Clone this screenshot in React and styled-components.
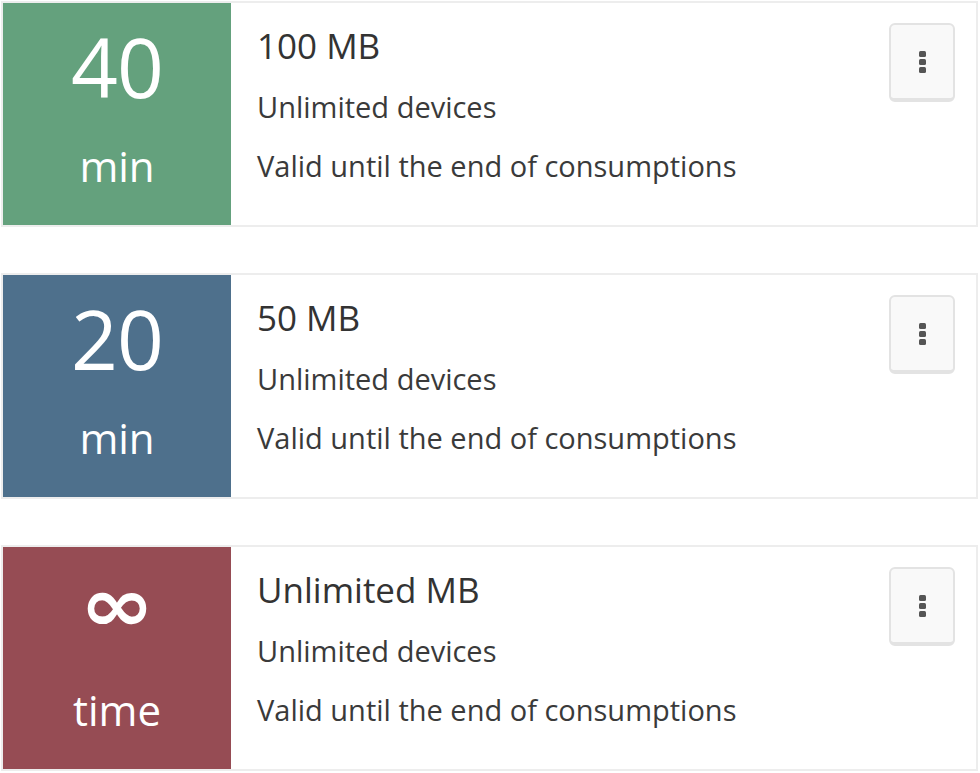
import React from "react";
import styled, { createGlobalStyle } from "styled-components";

const GlobalStyle = createGlobalStyle`
  html, body {
    margin: 0;
    padding: 0;
    background: #ffffff;
  }
  body {
    font-family: "Open Sans", "Noto Sans", sans-serif;
    color: #333333;
  }
`;

const plans = [
  { amount: "40", unit: "min", color: "#64a17d", title: "100 MB" },
  { amount: "20", unit: "min", color: "#4e708c", title: "50 MB" },
  { amount: "∞", unit: "time", color: "#964c54", title: "Unlimited MB", infinite: true },
];

const List = styled.div`
  display: flex;
  flex-direction: column;
  gap: 46px;
  padding: 1px 2px 1px 1px;
`;

const Card = styled.div`
  display: flex;
  height: 222px;
  border: 2px solid #ededed;
  background: #fff;
`;

const Badge = styled.div`
  width: 228px;
  flex-shrink: 0;
  background: ${(p) => p.$color};
  color: #fff;
  display: flex;
  flex-direction: column;
  align-items: center;
`;

const Amount = styled.div`
  font-size: 82px;
  line-height: 1;
  margin-top: 22px;
  height: 82px;
  letter-spacing: -1px;
`;

const Infinity = styled.div`
  font-family: "DejaVu Sans", sans-serif;
  font-size: 90px;
  font-weight: 700;
  line-height: 1;
  margin-top: 13px;
  height: 91px;
  transform: scale(1, 0.84);
`;

const Unit = styled.div`
  font-size: 42px;
  line-height: 1;
  margin-top: 38px;
`;

const Body = styled.div`
  flex: 1;
  display: flex;
  justify-content: space-between;
  padding: 0 21px 0 26px;
`;

const Info = styled.div`
  display: flex;
  flex-direction: column;
  padding-top: 23px;
`;

const Title = styled.div`
  font-size: 35px;
  line-height: 40px;
  color: #333;
`;

const Line = styled.div`
  font-size: 29px;
  line-height: 59px;
  color: #3a3a3a;
  margin-top: ${(p) => (p.$first ? "11px" : "0")};
`;

const MenuButton = styled.button`
  margin-top: 20px;
  width: 66px;
  height: 79px;
  border: 2px solid #e3e3e3;
  border-bottom-width: 4px;
  border-radius: 6px;
  background: #f9f9f9;
  display: flex;
  flex-direction: column;
  align-items: center;
  justify-content: center;
  gap: 2px;
  padding: 0;
  cursor: pointer;
`;

const Dot = styled.span`
  width: 7px;
  height: 6px;
  border-radius: 1.5px;
  background: #555;
`;

export default function App() {
  return (
    <>
      <GlobalStyle />
      <List>
        {plans.map((p) => (
          <Card key={p.title}>
            <Badge $color={p.color}>
              {p.infinite ? (
                <Infinity>{p.amount}</Infinity>
              ) : (
                <Amount>{p.amount}</Amount>
              )}
              <Unit>{p.unit}</Unit>
            </Badge>
            <Body>
              <Info>
                <Title>{p.title}</Title>
                <Line $first>Unlimited devices</Line>
                <Line>Valid until the end of consumptions</Line>
              </Info>
              <MenuButton aria-label="More">
                <Dot />
                <Dot />
                <Dot />
              </MenuButton>
            </Body>
          </Card>
        ))}
      </List>
    </>
  );
}
